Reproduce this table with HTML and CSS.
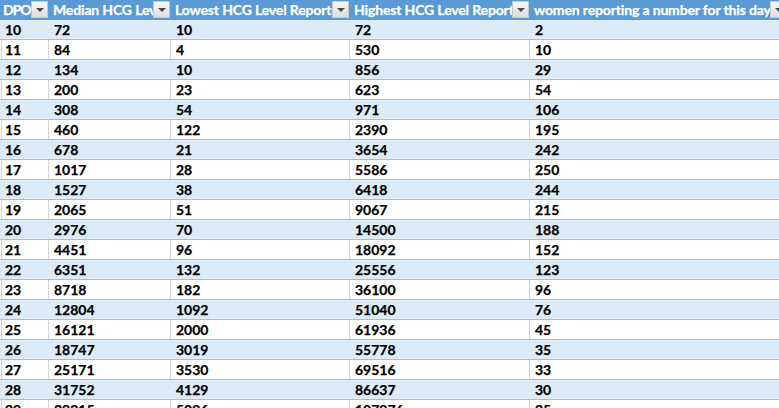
FILE: index.html
```html
<!DOCTYPE html>
<html>
<head>
<meta charset="utf-8">
<link rel="stylesheet" href="styles.css">
</head>
<body>
<div class="sheet">
  <div class="row head">
    <div class="cell first"><span class="label">DPO</span><span class="btn"><span class="tri"></span></span></div>
    <div class="cell"><span class="label">Median HCG Level Reported</span><span class="btn"><span class="tri"></span></span></div>
    <div class="cell"><span class="label">Lowest HCG Level Reported</span><span class="btn"><span class="tri"></span></span></div>
    <div class="cell"><span class="label">Highest HCG Level Reported</span><span class="btn"><span class="tri"></span></span></div>
    <div class="cell"><span class="label">women reporting a number for this day</span><span class="btn"><span class="tri"></span></span></div>
  </div>
  <div class="row band"><div class="cell">10</div><div class="cell">72</div><div class="cell">10</div><div class="cell">72</div><div class="cell">2</div></div>
  <div class="row plain"><div class="cell">11</div><div class="cell">84</div><div class="cell">4</div><div class="cell">530</div><div class="cell">10</div></div>
  <div class="row band"><div class="cell">12</div><div class="cell">134</div><div class="cell">10</div><div class="cell">856</div><div class="cell">29</div></div>
  <div class="row plain"><div class="cell">13</div><div class="cell">200</div><div class="cell">23</div><div class="cell">623</div><div class="cell">54</div></div>
  <div class="row band"><div class="cell">14</div><div class="cell">308</div><div class="cell">54</div><div class="cell">971</div><div class="cell">106</div></div>
  <div class="row plain"><div class="cell">15</div><div class="cell">460</div><div class="cell">122</div><div class="cell">2390</div><div class="cell">195</div></div>
  <div class="row band"><div class="cell">16</div><div class="cell">678</div><div class="cell">21</div><div class="cell">3654</div><div class="cell">242</div></div>
  <div class="row plain"><div class="cell">17</div><div class="cell">1017</div><div class="cell">28</div><div class="cell">5586</div><div class="cell">250</div></div>
  <div class="row band"><div class="cell">18</div><div class="cell">1527</div><div class="cell">38</div><div class="cell">6418</div><div class="cell">244</div></div>
  <div class="row plain"><div class="cell">19</div><div class="cell">2065</div><div class="cell">51</div><div class="cell">9067</div><div class="cell">215</div></div>
  <div class="row band"><div class="cell">20</div><div class="cell">2976</div><div class="cell">70</div><div class="cell">14500</div><div class="cell">188</div></div>
  <div class="row plain"><div class="cell">21</div><div class="cell">4451</div><div class="cell">96</div><div class="cell">18092</div><div class="cell">152</div></div>
  <div class="row band"><div class="cell">22</div><div class="cell">6351</div><div class="cell">132</div><div class="cell">25556</div><div class="cell">123</div></div>
  <div class="row plain"><div class="cell">23</div><div class="cell">8718</div><div class="cell">182</div><div class="cell">36100</div><div class="cell">96</div></div>
  <div class="row band"><div class="cell">24</div><div class="cell">12804</div><div class="cell">1092</div><div class="cell">51040</div><div class="cell">76</div></div>
  <div class="row plain"><div class="cell">25</div><div class="cell">16121</div><div class="cell">2000</div><div class="cell">61936</div><div class="cell">45</div></div>
  <div class="row band"><div class="cell">26</div><div class="cell">18747</div><div class="cell">3019</div><div class="cell">55778</div><div class="cell">35</div></div>
  <div class="row plain"><div class="cell">27</div><div class="cell">25171</div><div class="cell">3530</div><div class="cell">69516</div><div class="cell">33</div></div>
  <div class="row band"><div class="cell">28</div><div class="cell">31752</div><div class="cell">4129</div><div class="cell">86637</div><div class="cell">30</div></div>
  <div class="row plain"><div class="cell">29</div><div class="cell">39215</div><div class="cell">5096</div><div class="cell">107976</div><div class="cell">25</div></div>
</div>
</body>
</html>
```

FILE: styles.css
```css
html, body {
  margin: 0;
  padding: 0;
  background: #ffffff;
  overflow: hidden;
}
.sheet {
  width: 788px;
  font-family: Lato, "Liberation Sans", sans-serif;
  font-weight: 700;
  font-size: 14px;
  color: #000;
  -webkit-text-stroke: 0.25px currentColor;
}
.row {
  display: grid;
  grid-template-columns: 49px 122px 179px 180px 258px;
  height: 20px;
  box-sizing: border-box;
  border-bottom: 1px solid #9bc2e6;
}
.cell {
  box-sizing: border-box;
  padding: 0 0 0 5px;
  line-height: 20px;
  height: 19px;
  white-space: nowrap;
  overflow: hidden;
  border-right: 1px solid transparent;
}
.plain .cell {
  border-right-color: #d4d4d4;
}
.plain .cell:first-child {
  background: linear-gradient(to right, transparent 1px, #d4d4d4 1px, #d4d4d4 2px, transparent 2px);
}
.band {
  background: #ddebf7;
}
.head {
  background: #5b9bd5;
  border-bottom-color: #5b9bd5;
  color: #ffffff;
  letter-spacing: -0.15px;
}
.head .cell {
  display: flex;
  align-items: flex-start;
  padding-left: 4px;
  border-right: 1px solid #5b9bd5;
}
.head .cell.first {
  padding-left: 3px;
  border-right-width: 0;
  letter-spacing: -1px;
}
.head .cell.first .label {
  overflow: visible;
}
.head .cell.first .btn {
  margin-right: 1px;
}
.label {
  flex: 1;
  min-width: 0;
  overflow: hidden;
  white-space: nowrap;
}
.btn {
  flex: none;
  position: relative;
  width: 17px;
  height: 17px;
  margin-top: 1px;
  box-sizing: border-box;
  border: 1px solid #c6c6c6;
  background: linear-gradient(#f7f7f7, #dedede);
  display: flex;
  align-items: center;
  justify-content: center;
  -webkit-text-stroke: 0;
}
.tri {
  width: 0;
  height: 0;
  border-left: 4px solid transparent;
  border-right: 4px solid transparent;
  border-top: 4px solid #4a4a4a;
  margin-top: 1px;
}
```
